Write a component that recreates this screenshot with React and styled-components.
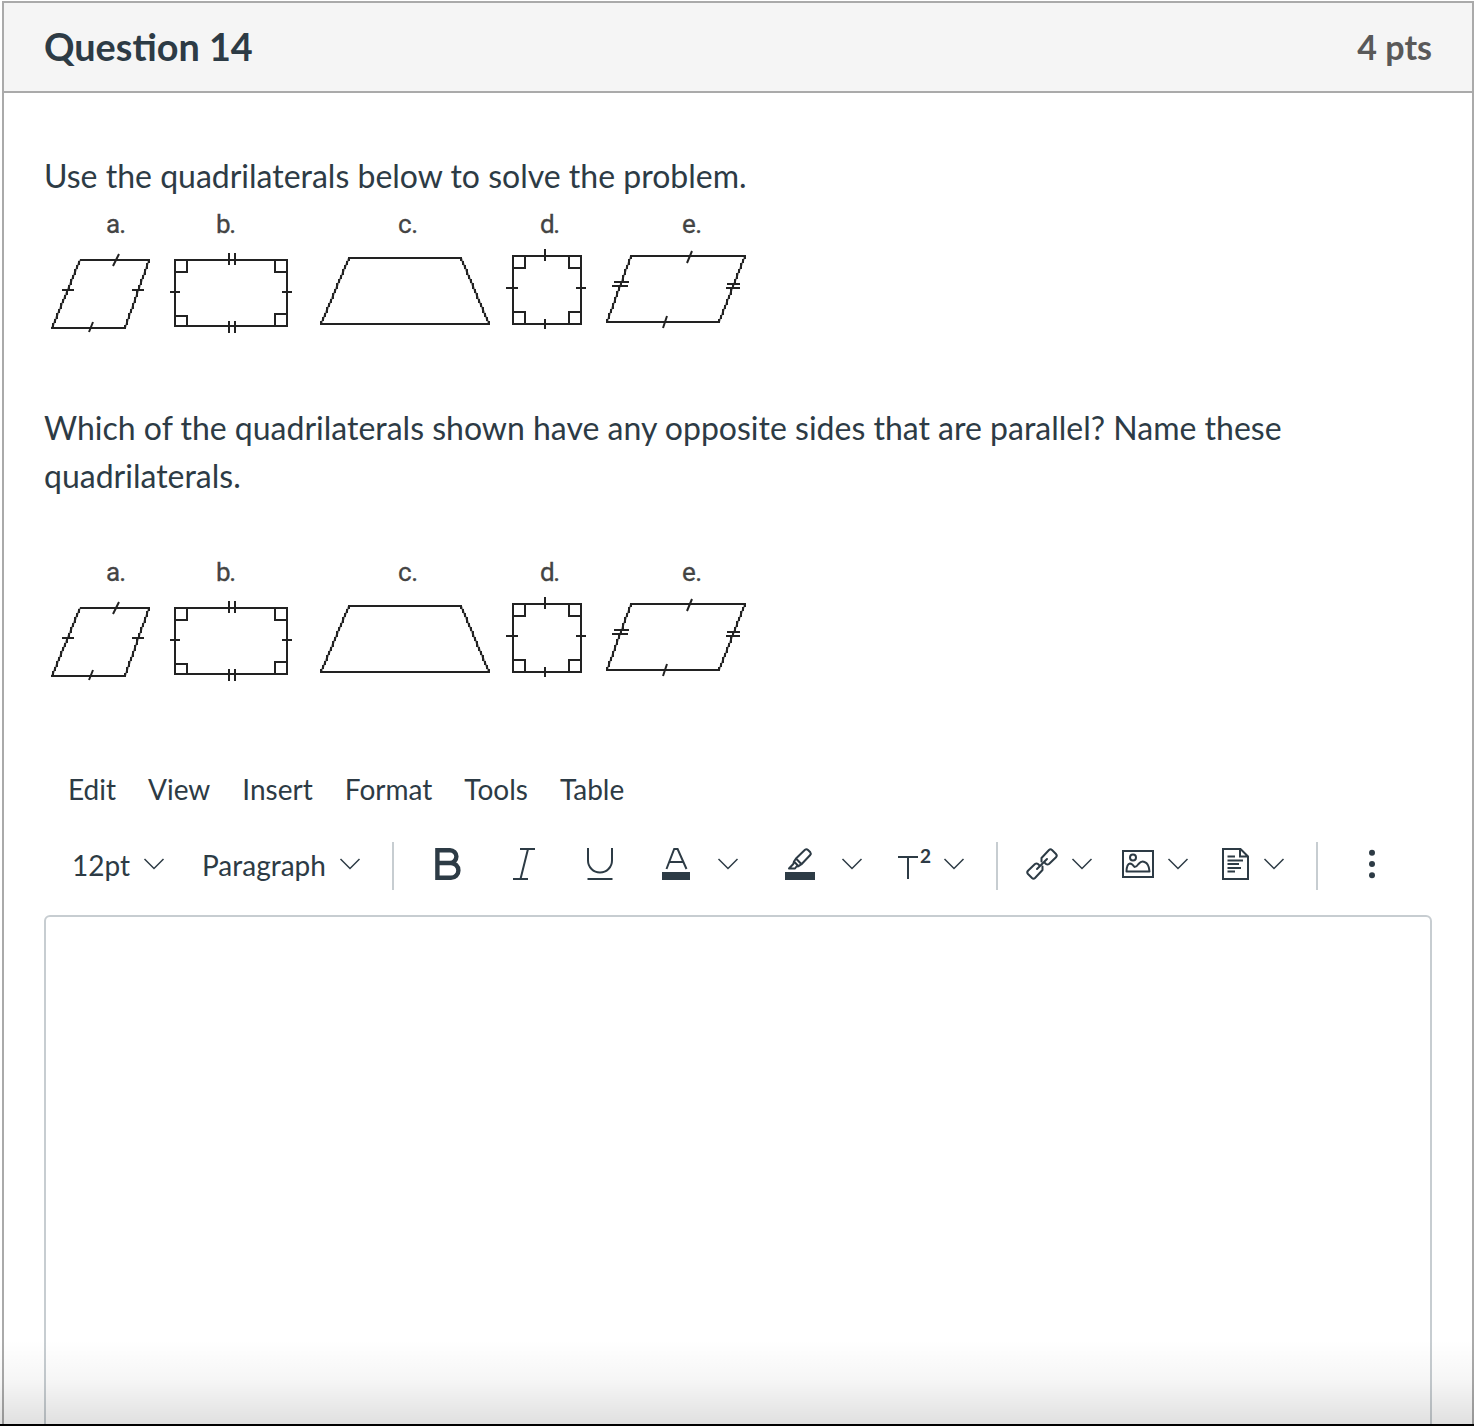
import styled, { createGlobalStyle } from 'styled-components';

const GlobalStyles = createGlobalStyle`
  html {
    --ink: #2d3b45;
    --grey: #595959;
    --border: #aaaaaa;
    --lightBorder: #c7cdd1;
    box-sizing: border-box;
  }
  *, *:before, *:after {
    box-sizing: inherit;
  }
  body {
    margin: 0;
    background: white;
    color: var(--ink);
    font-family: Lato, 'Liberation Sans', sans-serif;
    font-size: 32px;
    line-height: 48px;
  }
`;

const PageStyles = styled.div`
  position: relative;
  height: 1426px;
  padding: 1px 0 0 2px;
  overflow: hidden;
`;

const QuestionStyles = styled.section`
  display: flex;
  flex-direction: column;
  height: 1500px;
  border: 2px solid var(--border);
`;

const QuestionHeader = styled.header`
  display: flex;
  justify-content: space-between;
  align-items: center;
  height: 90px;
  padding: 0 40px;
  background: #f5f5f5;
  border-bottom: 2px solid var(--border);
  font-weight: bold;
`;

const QuestionName = styled.h2`
  margin: 0;
  font-size: 37.8px;
`;

const Points = styled.span`
  font-size: 34px;
  color: var(--grey);
`;

const QuestionBody = styled.div`
  display: flex;
  flex-direction: column;
  flex: 1;
  padding: 59px 40px 0;
`;

const Paragraph = styled.p`
  margin: 0 0 ${(props) => props.$gap}px;
`;

const Figure = styled.svg`
  display: block;
  width: 712px;
  height: 136px;
  margin-bottom: ${(props) => props.$gap}px;
  text {
    font-family: Roboto, sans-serif;
    font-size: 26px;
    fill: #444;
    stroke: #444;
    stroke-width: 0.3;
  }
`;

const MenuBar = styled.nav`
  display: flex;
  gap: 32px;
  height: 48px;
  padding-left: 24px;
  font-size: 28px;
`;

const Toolbar = styled.div`
  display: flex;
  align-items: center;
  height: 48px;
  margin: 29px 0 25px;
  padding-left: 28px;
`;

const ToolLabel = styled.span`
  flex: none;
  width: ${(props) => props.$width}px;
  margin: 0 0 2px ${(props) => props.$space || 0}px;
  font-size: 28px;
`;

const Icon = styled.svg`
  flex: none;
  width: 32px;
  height: 32px;
  margin: 0 0 4px ${(props) => props.$space}px;
  overflow: visible;
  fill: none;
  stroke: var(--ink);
  stroke-width: 2;
`;

const Arrow = styled(Icon)`
  width: 20px;
  height: 12px;
  stroke-width: 1.5;
`;

const Superscript = styled.text`
  fill: var(--ink);
  stroke: none;
  font-size: 19px;
  font-weight: bold;
`;

const Divider = styled.div`
  flex: none;
  width: 2px;
  height: 48px;
  margin-left: ${(props) => props.$space}px;
  background: var(--lightBorder);
`;

const Editor = styled.div`
  flex: 1;
  border: 2px solid var(--lightBorder);
  border-radius: 6px;
`;

const BottomFade = styled.div`
  position: absolute;
  left: 0;
  right: 0;
  bottom: 0;
  height: 86px;
  border-bottom: 2px solid black;
  background: linear-gradient(
    rgba(0, 0, 0, 0),
    rgba(0, 0, 0, 0.04) 50%,
    rgba(0, 0, 0, 0.12)
  );
`;

const menus = ['Edit', 'View', 'Insert', 'Format', 'Tools', 'Table'];

// x1, y1, x2, y2 of every slanted side
const slants = [
  [80, 260, 52, 328],
  [149, 260, 125, 328],
  [349, 258, 321, 324],
  [461, 258, 489, 324],
  [631, 256, 607, 322],
  [745, 256, 719, 322],
];

// slanted sides are stepped, two pixels at a time
function steps(x1, y1, x2, y2) {
  let d = '';
  for (let y = y1; y <= y2; y += 2) {
    const x = x1 + ((x2 - x1) * (y - y1)) / (y2 - y1);
    d += `M${Math.round((x - 1) / 2) * 2} ${y - 1}h2v2h-2z`;
  }
  return d;
}

function Quadrilaterals({ gap }) {
  return (
    <Figure $gap={gap} viewBox="44 208 712 136">
      <text x="106" y="233" textLength="20">a.</text>
      <text x="216" y="233" textLength="20">b.</text>
      <text x="398" y="233" textLength="20">c.</text>
      <text x="540" y="233" textLength="20">d.</text>
      <text x="682" y="233" textLength="20">e.</text>
      <g fill="#222">
        {slants.map((s) => (
          <path key={s.join()} d={steps(...s)} />
        ))}
      </g>
      <g fill="none" stroke="#222" strokeOpacity="0.5" strokeWidth="2">
        {slants.map(([x1, y1, x2, y2]) => (
          <path key={`${x1}-${x2}`} d={`M${x1} ${y1}L${x2} ${y2}`} />
        ))}
      </g>
      <g fill="none" stroke="#222" strokeWidth="2">
        <path d="M80 260H150M51 328H126" />
        <path d="M119 254L113 266M62 290H74M132 290H144M93 322L89 332" />
        <path d="M175 260H287V326H175ZM175 272H187V260M275 260V272H287M175 316H187V326M287 314H275V326" />
        <path d="M229 253V265M235 253V265M229 321V333M235 321V333M170 292H180M282 292H292" />
        <path d="M348 258H462M320 324H490" />
        <path d="M513 256H581V324H513ZM513 268H525V256M569 256V268H581M513 312H525V324M581 312H569V324" />
        <path d="M545 249V261M545 319V329M506 288H518M576 288H586" />
        <path d="M630 256H746M606 322H720" />
        <path d="M692 251L687 263M667 316L663 328M614 282H629M612 286H628M727 284H740M726 288H740" />
      </g>
    </Figure>
  );
}

function Chevron({ space = 14 }) {
  return (
    <Arrow $space={space} viewBox="0 0 20 12">
      <path d="M.5 1L10 10.5L19.5 1" />
    </Arrow>
  );
}

export default function App() {
  return (
    <PageStyles>
      <GlobalStyles />
      <QuestionStyles>
        <QuestionHeader>
          <QuestionName>Question 14</QuestionName>
          <Points>4 pts</Points>
        </QuestionHeader>
        <QuestionBody>
          <Paragraph $gap={8}>
            Use the quadrilaterals below to solve the problem.
          </Paragraph>
          <Quadrilaterals gap={60} />
          <Paragraph $gap={56}>
            Which of the quadrilaterals shown have any opposite sides that are
            parallel? Name these quadrilaterals.
          </Paragraph>
          <Quadrilaterals gap={73} />
          <MenuBar>
            {menus.map((menu) => (
              <span key={menu}>{menu}</span>
            ))}
          </MenuBar>
          <Toolbar>
            <ToolLabel $width={58}>12pt</ToolLabel>
            <Chevron />
            <ToolLabel $width={124} $space={38}>
              Paragraph
            </ToolLabel>
            <Chevron />
            <Divider $space={32} />
            <Icon $space={38} viewBox="0 0 32 32">
              <path
                strokeWidth="4.4"
                d="M5.4 2.2H18a6.3 6.3 0 0 1 0 12.8H5.4M18 15h1a7.3 7.3 0 0 1 0 14.8H5.4V0"
              />
            </Icon>
            <Icon $space={44} viewBox="0 0 32 32">
              <path d="M12 1H27M5 31H20M20 1L12.5 31" />
            </Icon>
            <Icon $space={44} viewBox="0 0 32 32">
              <path d="M4 0V12.5a12 12 0 0 0 24 0V0M3.5 31H28.5" />
            </Icon>
            <Icon $space={44} viewBox="0 0 32 32">
              <path d="M6.5 21L14.2 1H17.6L26.500 21M9.5 14H23.5" />
              <path fill="var(--ink)" stroke="none" d="M2 24H30V32H2z" />
            </Icon>
            <Chevron space={26} />
            <Icon $space={46} viewBox="0 0 32 32">
              <path
                strokeLinejoin="round"
                d="M12 10.5L21 1.8Q22.5.6 24 2L26.3 4.3Q27.4 5.7 26.2 7L17.5 16.2zM12 10.5L10 13.5L14.5 18.2L17.5 16.2M10 13.5L9.3 16L5 20.5H11L12.5 18.5L14.5 18.2"
              />
              <path fill="var(--ink)" stroke="none" d="M1 24H31V32H1z" />
            </Icon>
            <Chevron space={26} />
            <Icon $space={36} viewBox="0 0 32 32">
              <path d="M0 9H20M10 9V31" />
              <Superscript x="22" y="15">
                2
              </Superscript>
            </Icon>
            <Chevron />
            <Divider $space={32} />
            <Icon $space={28} viewBox="0 0 32 32">
              <path
                strokeLinecap="round"
                strokeLinejoin="round"
                d="M15.5 13.5V10L23 2Q24.5.6 26 2L30 6Q31.5 7.7 30 9.2L23 16Q21.5 17 20 16L19 15M16.5 18.5V22L9 30Q7.5 31.4 6 30L2 26Q.5 24.3 2 22.8L9 16Q10.5 15 12 16L13 17M11 21L21 11"
              />
            </Icon>
            <Chevron />
            <Icon $space={30} viewBox="0 0 32 32">
              <path d="M1 3H31V29H1z" />
              <circle cx="11" cy="9.5" r="3" />
              <path
                strokeLinejoin="round"
                d="M4.5 23.5Q4.7 16 8 15.5Q10 15.5 12.5 19Q14.5 19 16.5 16Q19.5 12.500 22.500 14Q27 15.5 27.5 23.5z"
              />
            </Icon>
            <Chevron />
            <Icon $space={32} viewBox="0 0 32 32">
              <path d="M3 1H20.5L28 8.5V31H3zM20 1V8.5H28M7.5 8.5H15M7.5 12.5H23M7.5 16H19M7.5 20H21M7.5 23.5H15" />
            </Icon>
            <Chevron space={12} />
            <Divider $space={32} />
            <Icon $space={38} viewBox="0 0 32 32">
              <g fill="var(--ink)" stroke="none">
                <circle cx="16" cy="4.7" r="3" />
                <circle cx="16" cy="16" r="3" />
                <circle cx="16" cy="27.2" r="3" />
              </g>
            </Icon>
          </Toolbar>
          <Editor />
        </QuestionBody>
      </QuestionStyles>
      <BottomFade />
    </PageStyles>
  );
}
